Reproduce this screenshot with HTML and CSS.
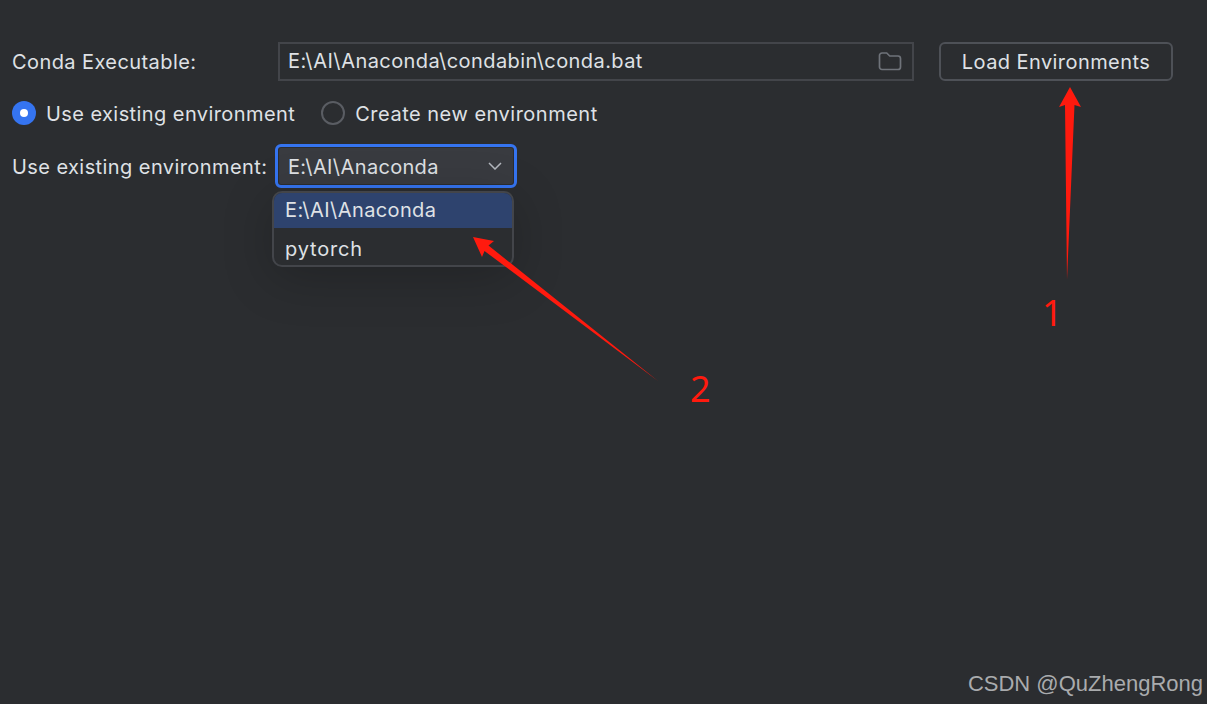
FILE: index.html
```html
<!DOCTYPE html>
<html lang="en">
<head>
<meta charset="utf-8">
<title>Conda Environment</title>
<link rel="stylesheet" href="styles.css">
</head>
<body>
<main class="panel">
  <div class="row row-exe">
    <label class="label label-exe">Conda Executable:</label>
    <div class="input">
      <span class="input-text">E:\AI\Anaconda\condabin\conda.bat</span>
      <svg class="folder" width="24" height="20" viewBox="0 0 24 20" fill="none"><path d="M1.500 4.500a2.500 2.500 0 0 1 2.500-2.500h4.700l3 3h8.300a2.500 2.500 0 0 1 2.500 2.500v8.500a2.500 2.500 0 0 1-2.500 2.500H4a2.500 2.500 0 0 1-2.500-2.500z" stroke="#6f737a" stroke-width="1.700"/></svg>
    </div>
    <button class="btn"><span class="btn-text">Load Environments</span></button>
  </div>
  <div class="row row-radio">
    <span class="radio radio-on"><span class="radio-dot"></span></span>
    <span class="radio-label">Use existing environment</span>
    <span class="radio radio-off"></span>
    <span class="radio-label radio-label-new">Create new environment</span>
  </div>
  <div class="row row-select">
    <label class="label label-sel">Use existing environment:</label>
    <div class="select-wrap">
      <div class="select">
        <span class="select-text">E:\AI\Anaconda</span>
        <svg class="chev" width="14" height="8" viewBox="0 0 14 8" fill="none"><path d="M1 1l6 6 6-6" stroke="#b4b8bf" stroke-width="1.500"/></svg>
      </div>
      <ul class="popup">
        <li class="item item-on">E:\AI\Anaconda</li>
        <li class="item item-plain">pytorch</li>
      </ul>
    </div>
  </div>
</main>
<svg class="marks" width="1207" height="704" viewBox="0 0 1207 704">
  <path d="M1070 87L1081 107L1074.500 105L1067 280L1065 105L1059 107z" fill="#ff1a0e"/>
  <path d="M473 237L494 241L488.500 245.500L658 381L484.500 251L482 257z" fill="#ff1a0e"/>
</svg>
<span class="num num-1">1</span>
<span class="num num-2">2</span>
<span class="mark">CSDN @QuZhengRong</span>
</body>
</html>
```
FILE: styles.css
```css
* { box-sizing: border-box; }
html, body { margin: 0; height: 100%; }
body {
  width: 1207px;
  height: 704px;
  overflow: hidden;
  background: #2b2d30;
  color: #dfe1e5;
  font-family: Inter, "Liberation Sans", sans-serif;
  font-size: 20px;
  letter-spacing: .42px;
  position: relative;
}
.panel { padding: 42px 34px 0 12px; display: flex; flex-direction: column; }
.row { display: flex; align-items: center; }
.row-exe { height: 39px; }
.label, .radio-label, .btn-text, .select-text, .item { line-height: 24px; padding-top: 2px; }
.label-exe { width: 266px; padding-top: 0; }
.input {
  width: 636px;
  height: 39px;
  border: 2px solid #43454a;
  display: flex;
  align-items: center;
  justify-content: space-between;
  padding: 0 10px 0 8px;
}
.input-text { line-height: 24px; padding-bottom: 2px; }
.folder { flex: none; margin-bottom: 2px; }
.btn {
  margin-left: 25px;
  width: 234px;
  height: 39px;
  background: transparent;
  border: 2px solid #4e5157;
  border-radius: 6px;
  color: #dfe1e5;
  font: inherit;
  letter-spacing: inherit;
  padding: 0;
}
.btn-text { display: block; padding-top: 1px; }
.row-radio { margin-top: 18px; height: 28px; }
.radio { width: 24px; height: 24px; border-radius: 50%; flex: none; display: flex; align-items: center; justify-content: center; }
.radio-on { background: #3574f0; }
.radio-dot { width: 8px; height: 8px; border-radius: 50%; background: #fff; }
.radio-off { border: 2px solid #5a5d63; margin-left: 26px; }
.radio-label { margin-left: 10px; }
.radio-label-new { letter-spacing: .5px; }
.row-select { margin-top: 17px; height: 44px; }
.label-sel { width: 263px; }
.select-wrap { position: relative; }
.select {
  width: 242px;
  height: 44px;
  border: 3px solid #3574f0;
  border-radius: 6px;
  background: #393b40;
  box-shadow: inset 0 0 0 1px #2b2d30;
  display: flex;
  align-items: center;
  justify-content: space-between;
  padding: 0 12px 0 10px;
}
.select-text { letter-spacing: .32px; }
.popup {
  position: absolute;
  left: -3px;
  top: 47px;
  width: 242px;
  height: 76px;
  margin: 0;
  padding: 0;
  list-style: none;
  background: #2b2d30;
  border: 2px solid #43454a;
  border-radius: 10px;
  overflow: hidden;
  box-shadow: 0 10px 50px rgba(0, 0, 0, .22);
}
.item { height: 37px; padding-left: 11px; padding-top: 4px; display: flex; align-items: center; }
.item-on { height: 35px; background: #2e436e; padding-top: 0; padding-bottom: 2px; letter-spacing: .36px; }
.item-plain { letter-spacing: .8px; }
.marks { position: absolute; left: 0; top: 0; pointer-events: none; }
.num {
  position: absolute;
  font-family: "Noto Sans", sans-serif;
  font-weight: 400;
  font-size: 36px;
  letter-spacing: 0;
  line-height: 1;
  color: #ff1a0e;
}
.num-1 { left: 1042px; top: 295px; }
.num-2 { left: 690px; top: 371px; }
.mark {
  position: absolute;
  right: 4px;
  top: 671px;
  font-family: "Liberation Sans", sans-serif;
  font-size: 22px;
  letter-spacing: 0;
  line-height: 26px;
  color: #a9abad;
}
```
